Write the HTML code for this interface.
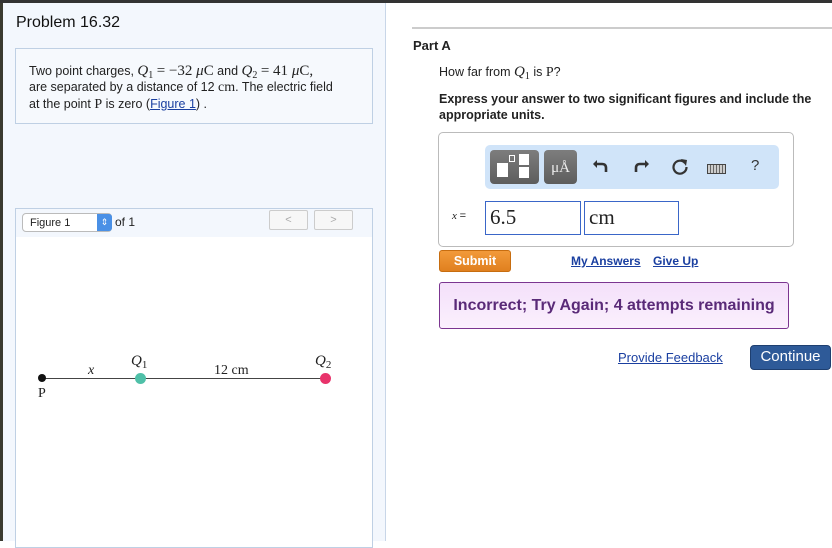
<!DOCTYPE html>
<html><head><meta charset="utf-8"><style>
*{margin:0;padding:0;box-sizing:border-box}
body{width:832px;height:541px;overflow:hidden;background:#fff;font-family:"Liberation Sans",Arial,sans-serif;position:relative;color:#222}
.a{position:absolute}
.m{font-family:"Liberation Serif",serif;font-style:italic}
.r{font-family:"Liberation Serif",serif}
a{color:#1a3fa0;text-decoration:underline}
sub{vertical-align:baseline;position:relative;top:3px;line-height:0}
</style></head><body>
<div class="a" style="left:0;top:0;width:832px;height:3px;background:#333"></div>
<div class="a" style="left:0;top:3px;width:3px;height:538px;background:#3a3a30"></div>
<div class="a" style="left:3px;top:3px;width:383px;height:538px;background:#f3f7fd;border-right:1px solid #c8d6e8"></div>
<div class="a" style="left:16px;top:14px;font-size:16px;color:#111">Problem 16.32</div>
<div class="a" style="left:15px;top:48px;width:358px;height:76px;background:#f6f9fd;border:1px solid #bfd0e4"></div>
<div class="a" style="left:29px;top:63px;font-size:12.5px;line-height:16px;color:#222;width:340px;white-space:nowrap">Two point charges, <span class="m" style="font-size:15px">Q</span><sub style="font-size:10px" class="r">1</sub> <span class="r" style="font-size:15px">= −32 <i>μ</i>C</span> and <span class="m" style="font-size:15px">Q</span><sub style="font-size:10px" class="r">2</sub> <span class="r" style="font-size:15px">= 41 <i>μ</i>C,</span><br>are separated by a distance of 12 <span class="r" style="font-size:14px">cm</span>. The electric field<br>at the point <span class="r" style="font-size:14px">P</span> is zero (<a href="#">Figure 1</a>) .</div>
<div class="a" style="left:15px;top:208px;width:358px;height:340px;background:#fff;border:1px solid #bfd0e4"></div>
<div class="a" style="left:16px;top:209px;width:356px;height:28px;background:#f3f7fd"></div>
<div class="a" style="left:22px;top:213px;width:90px;height:19px;border:1px solid #bbb;border-radius:4px;background:#fff;font-size:11px;padding:3px 0 0 7px">Figure 1</div>
<div class="a" style="left:97px;top:214px;width:15px;height:17px;background:#4a90e6;border-radius:0 3px 3px 0;color:#fff;font-size:9px;text-align:center;line-height:17px">⇕</div>
<div class="a" style="left:115px;top:215px;font-size:12px">of 1</div>
<div class="a" style="left:269px;top:210px;width:39px;height:20px;border:1px solid #ccc;border-radius:2px;background:#f7f7f7;color:#aaa;font-size:11px;text-align:center;line-height:18px">&lt;</div>
<div class="a" style="left:314px;top:210px;width:39px;height:20px;border:1px solid #ccc;border-radius:2px;background:#f7f7f7;color:#aaa;font-size:11px;text-align:center;line-height:18px">&gt;</div>
<div class="a" style="left:42px;top:378px;width:284px;height:1px;background:#444"></div>
<div class="a" style="left:38px;top:374px;width:8px;height:8px;border-radius:50%;background:#111"></div>
<div class="a" style="left:135px;top:373px;width:11px;height:11px;border-radius:50%;background:#4fc0a8"></div>
<div class="a" style="left:320px;top:373px;width:11px;height:11px;border-radius:50%;background:#e8336b"></div>
<div class="a r" style="left:38px;top:386px;font-size:14px">P</div>
<div class="a m" style="left:88px;top:363px;font-size:14px">x</div>
<div class="a r" style="left:131px;top:353px;font-size:15px"><i>Q</i><sub style="font-size:11px">1</sub></div>
<div class="a r" style="left:214px;top:363px;font-size:14px">12 cm</div>
<div class="a r" style="left:315px;top:353px;font-size:15px"><i>Q</i><sub style="font-size:11px">2</sub></div>

<div class="a" style="left:412px;top:27px;width:420px;height:2px;background:#ccc"></div>
<div class="a" style="left:413px;top:38px;font-size:13px;font-weight:bold">Part A</div>
<div class="a" style="left:439px;top:64px;font-size:12.5px">How far from <span class="m" style="font-size:15px">Q</span><sub class="r" style="font-size:10px">1</sub> is <span class="r" style="font-size:14px">P</span>?</div>
<div class="a" style="left:439px;top:91px;font-size:12.5px;font-weight:bold;line-height:16px;width:395px">Express your answer to two significant figures and include the appropriate units.</div>
<div class="a" style="left:438px;top:132px;width:356px;height:115px;border:1px solid #bbb;border-radius:5px"></div>
<div class="a" style="left:485px;top:145px;width:294px;height:44px;background:#d0e4f9;border-radius:5px"></div>
<div class="a" style="left:490px;top:150px;width:49px;height:34px;background:linear-gradient(#7d7d7d,#5d5d5d);border-radius:4px"></div>
<div class="a" style="left:497px;top:163px;width:11px;height:14px;background:#fff"></div>
<div class="a" style="left:509px;top:155px;width:6px;height:7px;border:1px solid #fff"></div>
<div class="a" style="left:519px;top:154px;width:10px;height:11px;background:#fff"></div>
<div class="a" style="left:519px;top:167px;width:10px;height:11px;background:#fff"></div>
<div class="a" style="left:544px;top:150px;width:33px;height:34px;background:linear-gradient(#7d7d7d,#5d5d5d);border-radius:4px;color:#eee;font-family:'Liberation Serif',serif;font-size:15px;text-align:center;line-height:36px">μÅ</div>
<svg class="a" style="left:592px;top:157px" width="18" height="18" viewBox="0 0 18 18"><path d="M5 3 L1 7 L5 11 Z" fill="#333"/><path d="M4 7 H10 Q14 7 14 11 V15" stroke="#333" stroke-width="2.6" fill="none"/></svg>
<svg class="a" style="left:632px;top:157px" width="18" height="18" viewBox="0 0 18 18"><path d="M13 3 L17 7 L13 11 Z" fill="#333"/><path d="M14 7 H8 Q4 7 4 11 V15" stroke="#333" stroke-width="2.6" fill="none"/></svg>
<svg class="a" style="left:671px;top:157px" width="18" height="18" viewBox="0 0 18 18"><path d="M14 6 A6.5 6.5 0 1 0 15.5 10" stroke="#333" stroke-width="2.2" fill="none"/><path d="M10 2 L16 3 L15 9 Z" fill="#333"/></svg>
<div class="a" style="left:707px;top:164px;width:19px;height:10px;border:1px solid #444;background:repeating-linear-gradient(90deg,#ccc 0 2px,#666 2px 3px)"></div>
<div class="a" style="left:751px;top:157px;font-size:15px;color:#333">?</div>
<div class="a m" style="left:452px;top:210px;font-size:11px">x <span style="font-style:normal;font-family:'Liberation Sans'">=</span></div>
<div class="a r" style="left:485px;top:201px;width:96px;height:34px;border:1px solid #3a66c8;font-size:21px;padding:3px 0 0 4px">6.5</div>
<div class="a r" style="left:584px;top:201px;width:95px;height:34px;border:1px solid #3a66c8;font-size:21px;padding:3px 0 0 4px">cm</div>
<div class="a" style="left:439px;top:250px;width:72px;height:22px;background:linear-gradient(#f29a3a,#e0801f);border:1px solid #c76d10;border-radius:3px;color:#fff;font-weight:bold;font-size:12.5px;text-align:center;line-height:20px">Submit</div>
<a class="a" href="#" style="left:571px;top:254px;font-size:12px;font-weight:bold">My Answers</a>
<a class="a" href="#" style="left:653px;top:254px;font-size:12px;font-weight:bold">Give Up</a>
<div class="a" style="left:439px;top:282px;width:350px;height:47px;background:linear-gradient(#f4e0fa,#fbf0fd);border:1px solid #7b3590;border-radius:3px;color:#5a2a78;font-weight:bold;font-size:16px;text-align:center;line-height:45px">Incorrect; Try Again; 4 attempts remaining</div>
<a class="a" href="#" style="left:618px;top:350px;font-size:13px">Provide Feedback</a>
<div class="a" style="left:750px;top:345px;width:81px;height:25px;background:#2e5a98;border:1px solid #1e3f70;border-radius:4px;color:#fff;font-size:15px;text-align:center;line-height:22px">Continue</div>
</body></html>
